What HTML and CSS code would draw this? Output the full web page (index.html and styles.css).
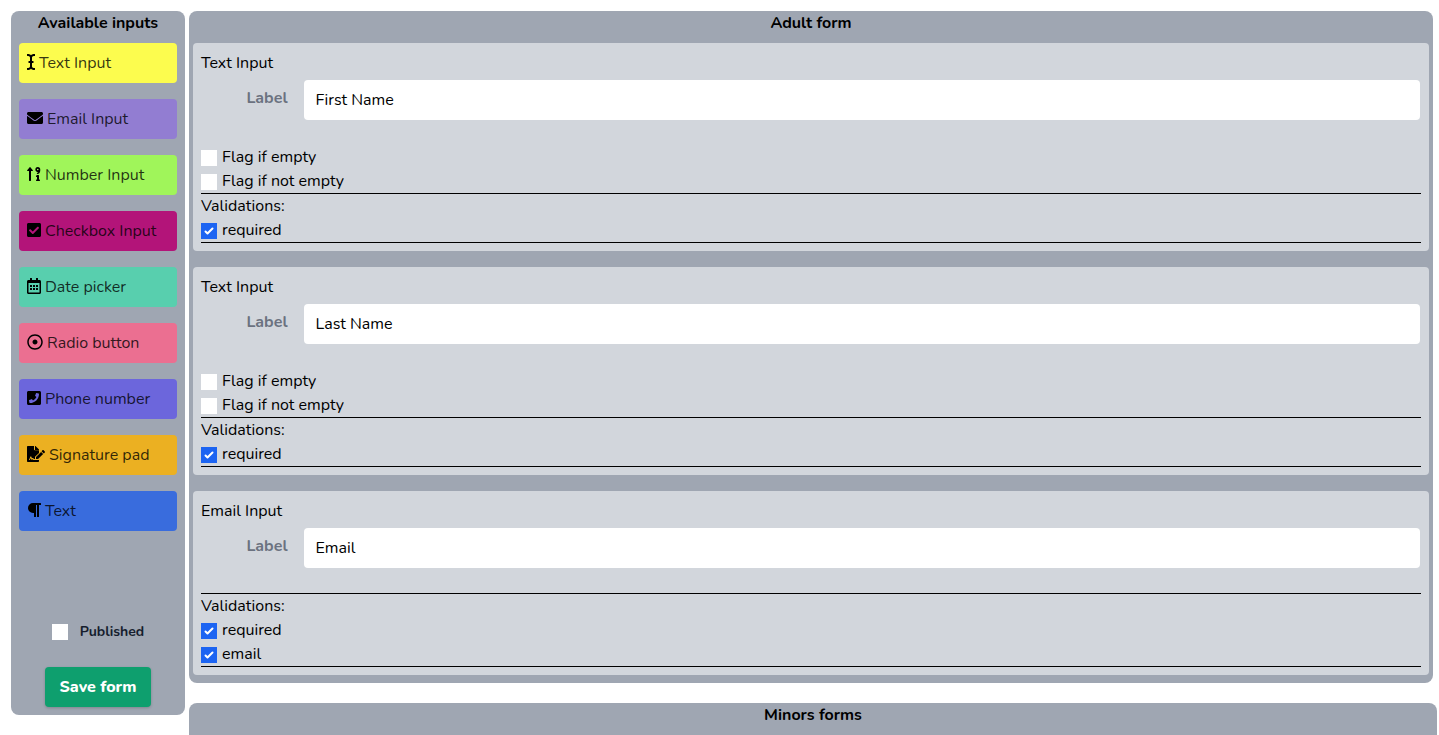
FILE: index.html
```html
<!DOCTYPE html>
<html lang="en">
    <head>
        <meta charset="utf-8">
        <meta name="viewport" content="width=device-width,initial-scale=1.0">
        <title>Form builder</title>
        <link rel="stylesheet" href="styles.css">
    </head>
    <body>
        <div class="builder">
            <aside class="panel sidebar">
                <h2 class="panel-title">Available inputs</h2>
                <div class="input-list">
                    <button type="button" class="input-type yellow">
                        <svg class="icon" width="8" height="16" viewBox="0 0 256 512"><path d="M256 52.048V12.065C256 5.496 250.726.148 244.158.066 211.621-.344 166.469.011 128 37.959 90.266.736 46.979-.114 11.913.114 5.318.157 0 5.519 0 12.114v39.645c0 6.687 5.458 12.078 12.145 11.998C38.111 63.447 96 67.243 96 112.182V224H60c-6.627 0-12 5.373-12 12v40c0 6.627 5.373 12 12 12h36v112c0 44.932-56.075 48.031-83.95 47.959C5.404 447.942 0 453.306 0 459.952v39.983c0 6.569 5.274 11.917 11.842 11.999 32.537.409 77.689.054 116.158-37.894 37.734 37.223 81.021 38.073 116.087 37.845 6.595-.043 11.913-5.405 11.913-12V460.24c0-6.687-5.458-12.078-12.145-11.998C217.889 448.553 160 444.939 160 400V288h36c6.627 0 12-5.373 12-12v-40c0-6.627-5.373-12-12-12h-36V112.182c0-44.932 56.075-48.213 83.95-48.142 6.646.018 12.05-5.346 12.05-11.992z"/></svg>
                        <span>Text Input</span>
                    </button>
                    <button type="button" class="input-type purple">
                        <svg class="icon" width="16" height="16" viewBox="0 0 512 512"><path d="M502.3 190.8c3.9-3.1 9.7-.2 9.7 4.7V400c0 26.5-21.5 48-48 48H48c-26.5 0-48-21.5-48-48V195.600c0-5 5.700-7.800 9.700-4.700 22.400 17.400 52.100 39.500 154.100 113.600 21.100 15.400 56.700 47.800 92.200 47.600 35.700.3 72-32.800 92.300-47.600 102-74.100 131.600-96.300 154-113.700zM256 320c23.200.4 56.600-29.200 73.400-41.400 132.700-96.300 142.800-104.700 173.400-128.700 5.800-4.500 9.200-11.500 9.200-18.900v-19c0-26.500-21.500-48-48-48H48c-26.500 0-48 21.500-48 48v19c0 7.400 3.400 14.300 9.200 18.900 30.600 23.900 40.700 32.400 173.400 128.700 16.800 12.200 50.200 41.800 73.400 41.400z"/></svg>
                        <span>Email Input</span>
                    </button>
                    <button type="button" class="input-type lime">
                        <svg class="icon" width="14" height="16" viewBox="0 0 448 512"><path d="M16 160h48v304c0 9 7 16 16 16h32c9 0 16-7 16-16V160h48c14 0 21-17 11-27L107 37c-6-6-16-6-22 0L5 133c-10 10-3 27 11 27z"/><path fill-rule="evenodd" d="M344 32a80 80 0 0 0-24 156c14 5 29 6 42 3-8 13-20 20-35 22-8 1-13 8-12 16l3 18c1 8 8 13 16 12 56-10 90-58 90-119v-28a80 80 0 0 0-80-80zm0 104a26 26 0 1 1 0-52 26 26 0 0 1 0 52z"/><path d="M400 432h-16V304c0-9-7-16-16-16h-48c-6 0-12 4-14 9l-16 32c-6 11 2 23 14 23h16v80h-16c-9 0-16 7-16 16v16c0 9 7 16 16 16h96c9 0 16-7 16-16v-16c0-9-7-16-16-16z"/></svg>
                        <span>Number Input</span>
                    </button>
                    <button type="button" class="input-type magenta">
                        <svg class="icon" width="14" height="16" viewBox="0 0 448 512"><path d="M400 480H48c-26.51 0-48-21.49-48-48V80c0-26.51 21.49-48 48-48h352c26.51 0 48 21.49 48 48v352c0 26.51-21.49 48-48 48zm-204.686-98.059l184-184c6.248-6.248 6.248-16.379 0-22.627l-22.627-22.627c-6.248-6.248-16.379-6.249-22.628 0L184 302.745l-70.059-70.059c-6.248-6.248-16.379-6.248-22.628 0l-22.627 22.627c-6.248 6.248-6.248 16.379 0 22.627l104 104c6.249 6.25 16.379 6.25 22.628.001z"/></svg>
                        <span>Checkbox Input</span>
                    </button>
                    <button type="button" class="input-type teal">
                        <svg class="icon" width="14" height="16" viewBox="0 0 448 512"><path d="M148 288h-40c-6.6 0-12-5.4-12-12v-40c0-6.6 5.4-12 12-12h40c6.6 0 12 5.4 12 12v40c0 6.6-5.4 12-12 12zm108-12v-40c0-6.6-5.4-12-12-12h-40c-6.6 0-12 5.4-12 12v40c0 6.6 5.4 12 12 12h40c6.6 0 12-5.4 12-12zm96 0v-40c0-6.6-5.4-12-12-12h-40c-6.6 0-12 5.4-12 12v40c0 6.6 5.4 12 12 12h40c6.6 0 12-5.4 12-12zm-96 96v-40c0-6.6-5.4-12-12-12h-40c-6.6 0-12 5.4-12 12v40c0 6.6 5.4 12 12 12h40c6.6 0 12-5.4 12-12zm-96 0v-40c0-6.6-5.4-12-12-12h-40c-6.6 0-12 5.4-12 12v40c0 6.6 5.4 12 12 12h40c6.6 0 12-5.4 12-12zm192 0v-40c0-6.6-5.4-12-12-12h-40c-6.6 0-12 5.4-12 12v40c0 6.6 5.4 12 12 12h40c6.6 0 12-5.4 12-12zm96-260v352c0 26.5-21.5 48-48 48H48c-26.5 0-48-21.5-48-48V112c0-26.5 21.5-48 48-48h48V12c0-6.6 5.4-12 12-12h40c6.6 0 12 5.4 12 12v52h128V12c0-6.6 5.4-12 12-12h40c6.6 0 12 5.4 12 12v52h48c26.5 0 48 21.5 48 48zm-48 346V160H48v298c0 3.3 2.7 6 6 6h340c3.3 0 6-2.7 6-6z"/></svg>
                        <span>Date picker</span>
                    </button>
                    <button type="button" class="input-type pink">
                        <svg class="icon" width="16" height="16" viewBox="0 0 512 512"><path d="M256 56c110.532 0 200 89.451 200 200 0 110.532-89.451 200-200 200-110.532 0-200-89.451-200-200 0-110.532 89.451-200 200-200m0-48C119.033 8 8 119.033 8 256s111.033 248 248 248 248-111.033 248-248S392.967 8 256 8zm0 168c-44.183 0-80 35.817-80 80s35.817 80 80 80 80-35.817 80-80-35.817-80-80-80z"/></svg>
                        <span>Radio button</span>
                    </button>
                    <button type="button" class="input-type indigo">
                        <svg class="icon" width="14" height="16" viewBox="0 0 448 512"><path d="M400 32H48C21.49 32 0 53.49 0 80v352c0 26.51 21.49 48 48 48h352c26.51 0 48-21.49 48-48V80c0-26.51-21.49-48-48-48zM94 416c-7.033 0-13.057-4.873-14.616-11.627l-14.998-65a15 15 0 0 1 8.707-17.16l69.998-29.999a15 15 0 0 1 17.518 4.289l30.997 37.885c48.944-22.963 88.297-62.858 110.781-110.78l-37.886-30.997a15.001 15.001 0 0 1-4.289-17.518l30-69.998a15 15 0 0 1 17.16-8.707l65 14.998A14.997 14.997 0 0 1 384 126c0 160.292-129.945 290-290 290z"/></svg>
                        <span>Phone number</span>
                    </button>
                    <button type="button" class="input-type orange">
                        <svg class="icon" width="18" height="16" viewBox="0 0 576 512"><path d="M224 136V0H24C11 0 0 11 0 24v464c0 13 11 24 24 24h336c13 0 24-11 24-24v-40H219c-12 0-23-7-28-17-5-9-13-9-18 0-7 14-29 13-34-2l-17-49-13 39c-7 18-24 29-43 29H64v-32h6c5 0 10-3 12-8l18-55c7-20 36-20 43 0l14 42c20-14 51-7 62 16 2 4 5 5 9 5h28v-69l128-127v-84H248c-13 0-24-11-24-24zm160-14c0-6-3-13-7-17L279 7c-4-5-11-7-17-7h-6v128h128z"/><path d="M288 351v65h65l163-163-65-65zm280-179-36-36c-10-10-27-10-37 0l-29 29 73 73 29-29c10-10 10-27 0-37z"/></svg>
                        <span>Signature pad</span>
                    </button>
                    <button type="button" class="input-type blue">
                        <svg class="icon" width="14" height="16" viewBox="0 0 448 512"><path d="M448 48v32a16 16 0 0 1-16 16h-48v368a16 16 0 0 1-16 16h-32a16 16 0 0 1-16-16V96h-32v368a16 16 0 0 1-16 16h-32a16 16 0 0 1-16-16V352h-32a160 160 0 0 1 0-320h240a16 16 0 0 1 16 16z"/></svg>
                        <span>Text</span>
                    </button>
                </div>
                <div class="actions">
                    <label class="published"><input type="checkbox" class="checkbox"> Published</label>
                    <button type="button" class="save">Save form</button>
                </div>
            </aside>

            <main class="forms">
                <section class="panel adult">
                    <h2 class="panel-title">Adult form</h2>
                    <div class="fields">
                        <div class="field">
                            <h3 class="field-type">Text Input</h3>
                            <div class="field-row">
                                <label class="field-label" for="label-first">Label</label>
                                <input id="label-first" class="field-input" type="text" value="First Name">
                            </div>
                            <label class="check"><input type="checkbox" class="checkbox"> Flag if empty</label>
                            <label class="check"><input type="checkbox" class="checkbox"> Flag if not empty</label>
                            <div class="validations">
                                <p>Validations:</p>
                                <label class="check"><input type="checkbox" class="checkbox" checked> required</label>
                            </div>
                        </div>
                        <div class="field">
                            <h3 class="field-type">Text Input</h3>
                            <div class="field-row">
                                <label class="field-label" for="label-last">Label</label>
                                <input id="label-last" class="field-input" type="text" value="Last Name">
                            </div>
                            <label class="check"><input type="checkbox" class="checkbox"> Flag if empty</label>
                            <label class="check"><input type="checkbox" class="checkbox"> Flag if not empty</label>
                            <div class="validations">
                                <p>Validations:</p>
                                <label class="check"><input type="checkbox" class="checkbox" checked> required</label>
                            </div>
                        </div>
                        <div class="field">
                            <h3 class="field-type">Email Input</h3>
                            <div class="field-row">
                                <label class="field-label" for="label-email">Label</label>
                                <input id="label-email" class="field-input" type="text" value="Email">
                            </div>
                            <div class="validations">
                                <p>Validations:</p>
                                <label class="check"><input type="checkbox" class="checkbox" checked> required</label>
                                <label class="check"><input type="checkbox" class="checkbox" checked> email</label>
                            </div>
                        </div>
                    </div>
                </section>
                <section class="panel minors">
                    <h2 class="panel-title">Minors forms</h2>
                </section>
            </main>
        </div>
    </body>
</html>
```
FILE: styles.css
```css
*, *::before, *::after {
    box-sizing: border-box;
}

html {
    scrollbar-width: none;
}

body {
    margin: 0;
    font-family: Nunito, Lato, sans-serif;
    font-size: 16px;
    line-height: 24px;
    color: #000;
    background-color: #fff;
}

h2, h3, p {
    margin: 0;
    font-size: 16px;
}

input, button {
    font-family: inherit;
    font-size: 16px;
    line-height: 24px;
}

.builder {
    display: flex;
    align-items: flex-start;
    gap: 4px;
    padding: 11px 2px 0 11px;
}

.panel {
    border-radius: 8px;
    background-color: #9fa6b2;
}

.panel-title {
    font-weight: 700;
    text-align: center;
}

.sidebar {
    flex: 0 0 174px;
    padding: 0 8px 8px;
}

.input-list {
    display: flex;
    flex-direction: column;
    gap: 16px;
    margin-top: 8px;
}

.input-type {
    display: flex;
    align-items: center;
    gap: 4px;
    border: none;
    border-radius: 4px;
    padding: 8px;
    text-align: left;
    color: rgba(0, 0, 0, 0.8);
    cursor: move;
}

.icon {
    flex: none;
    margin-bottom: 2px;
    fill: #000;
}

.yellow { background-color: #fcfc4e; }
.purple { background-color: #927dd2; }
.lime { background-color: #a0f55a; }
.magenta { background-color: #b31479; }
.teal { background-color: #58cfae; }
.pink { background-color: #eb6f91; }
.indigo { background-color: #6c66dc; }
.orange { background-color: #ebb022; }
.blue { background-color: #396cdd; }

.actions {
    display: flex;
    flex-direction: column;
    align-items: center;
    gap: 23px;
    margin-top: 89px;
}

.published {
    display: flex;
    align-items: center;
    gap: 12px;
    font-size: 14px;
    font-weight: 700;
    color: #161e2e;
}

.save {
    border: none;
    border-radius: 4px;
    padding: 8px 15px;
    font-weight: 800;
    color: #fff;
    background-color: #0e9f6e;
    box-shadow: 0 1px 3px rgba(0, 0, 0, 0.2);
    cursor: pointer;
}

.checkbox {
    flex: none;
    appearance: none;
    margin: 0;
    width: 16px;
    height: 16px;
    background-color: #fff;
}

.checkbox:checked {
    background: #1c64f2 url("data:image/svg+xml,%3Csvg viewBox='0 0 16 16' fill='white' xmlns='http://www.w3.org/2000/svg'%3E%3Cpath d='M12.207 4.793a1 1 0 0 1 0 1.414l-5 5a1 1 0 0 1-1.414 0l-2-2a1 1 0 0 1 1.414-1.414L6.500 9.086l4.293-4.293a1 1 0 0 1 1.414 0z'/%3E%3C/svg%3E") center / 16px no-repeat;
}

.forms {
    flex: 1;
    min-width: 0;
}

.adult {
    margin: 0 4px 20px 0;
    padding: 0 4px 8px;
}

.fields {
    display: flex;
    flex-direction: column;
    gap: 16px;
    margin-top: 8px;
}

.field {
    border-radius: 4px;
    padding: 8px;
    background-color: #d2d6dc;
}

.field-type {
    font-weight: 400;
}

.field-row {
    display: grid;
    grid-template-columns: 1fr 11fr;
    margin: 5px 1px 25px;
}

.field-label {
    padding: 6px 16px 0 0;
    font-weight: 700;
    text-align: right;
    color: #6b7280;
}

.field-input {
    border: none;
    border-radius: 4px;
    padding: 8px 12px;
    width: 100%;
    height: 40px;
    background-color: #fff;
}

.check {
    display: flex;
    align-items: center;
    gap: 5px;
}

.check .checkbox {
    margin-top: 2px;
}

.validations {
    border-top: 1px solid #000;
    border-bottom: 1px solid #000;
}

.minors {
    padding-bottom: 40px;
}
```
